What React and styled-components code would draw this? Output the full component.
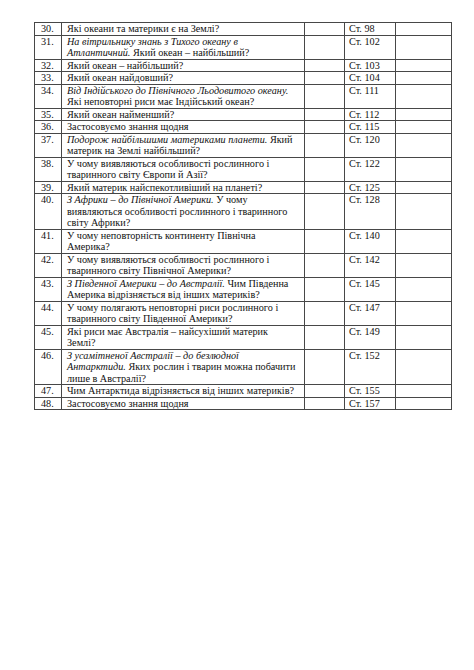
import styled, { createGlobalStyle } from "styled-components";

const GlobalStyle = createGlobalStyle`
  body {
    margin: 0;
    background: #fff;
  }
`;

const Page = styled.div`
  width: 474px;
  height: 670px;
  padding: 22px 0 0 34px;
  box-sizing: border-box;
  background: #fff;
  font-family: "Liberation Serif", "DejaVu Serif", serif;
  font-size: 10.2px;
  color: #111;
`;

const Table = styled.table`
  width: 417px;
  border-collapse: collapse;
  table-layout: fixed;
`;

const Cell = styled.td`
  border: 1px solid #474747;
  padding: 0 0 0 ${(p) => p.$pad || 5}px;
  line-height: 11.5px;
  vertical-align: top;
  white-space: nowrap;
  overflow: hidden;
`;

const Em = styled.i`
  font-style: italic;
`;

const rows = [
  ["30.", <>Які океани та материки є на Землі?</>, "Ст. 98"],
  [
    "31.",
    <>
      <Em>На вітрильнику знань з Тихого океану в</Em>
      <br />
      <Em>Атлантичний.</Em> Який океан – найбільший?
    </>,
    "Ст. 102",
  ],
  ["32.", <>Який океан – найбільший?</>, "Ст. 103"],
  ["33.", <>Який океан найдовший?</>, "Ст. 104"],
  [
    "34.",
    <>
      <Em>Від Індійського до Північного Льодовитого океану.</Em>
      <br />
      Які неповторні риси має Індійський океан?
    </>,
    "Ст. 111",
  ],
  ["35.", <>Який океан найменший?</>, "Ст. 112"],
  ["36.", <>Застосовуємо знання щодня</>, "Ст. 115"],
  [
    "37.",
    <>
      <Em>Подорож найбільшими материками планети.</Em> Який
      <br />
      материк на Землі найбільший?
    </>,
    "Ст. 120",
  ],
  [
    "38.",
    <>
      У чому виявляються особливості рослинного і
      <br />
      тваринного світу Європи й Азії?
    </>,
    "Ст. 122",
  ],
  ["39.", <>Який материк найспекотливіший на планеті?</>, "Ст. 125"],
  [
    "40.",
    <>
      <Em>З Африки – до Північної Америки.</Em> У чому
      <br />
      виявляються особливості рослинного і тваринного
      <br />
      світу Африки?
    </>,
    "Ст. 128",
  ],
  [
    "41.",
    <>
      У чому неповторність континенту Північна
      <br />
      Америка?
    </>,
    "Ст. 140",
  ],
  [
    "42.",
    <>
      У чому виявляються особливості рослинного і
      <br />
      тваринного світу Північної Америки?
    </>,
    "Ст. 142",
  ],
  [
    "43.",
    <>
      <Em>З Південної Америки – до Австралії.</Em> Чим Південна
      <br />
      Америка відрізняється від інших материків?
    </>,
    "Ст. 145",
  ],
  [
    "44.",
    <>
      У чому полягають неповторні риси рослинного і
      <br />
      тваринного світу Південної Америки?
    </>,
    "Ст. 147",
  ],
  [
    "45.",
    <>
      Які риси має Австралія – найсухіший материк
      <br />
      Землі?
    </>,
    "Ст. 149",
  ],
  [
    "46.",
    <>
      <Em>З усамітненої Австралії – до безлюдної</Em>
      <br />
      <Em>Антарктиди.</Em> Яких рослин і тварин можна побачити
      <br />
      лише в Австралії?
    </>,
    "Ст. 152",
  ],
  ["47.", <>Чим Антарктида відрізняється від інших материків?</>, "Ст. 155"],
  ["48.", <>Застосовуємо знання щодня</>, "Ст. 157"],
];

export default function App() {
  return (
    <>
      <GlobalStyle />
      <Page>
        <Table>
          <colgroup>
            <col style={{ width: 27 }} />
            <col style={{ width: 243 }} />
            <col style={{ width: 40 }} />
            <col style={{ width: 51 }} />
            <col style={{ width: 56 }} />
          </colgroup>
          <tbody>
            {rows.map(([num, text, page]) => (
              <tr key={num}>
                <Cell $pad={6}>{num}</Cell>
                <Cell>{text}</Cell>
                <Cell />
                <Cell $pad={4}>{page}</Cell>
                <Cell />
              </tr>
            ))}
          </tbody>
        </Table>
      </Page>
    </>
  );
}
